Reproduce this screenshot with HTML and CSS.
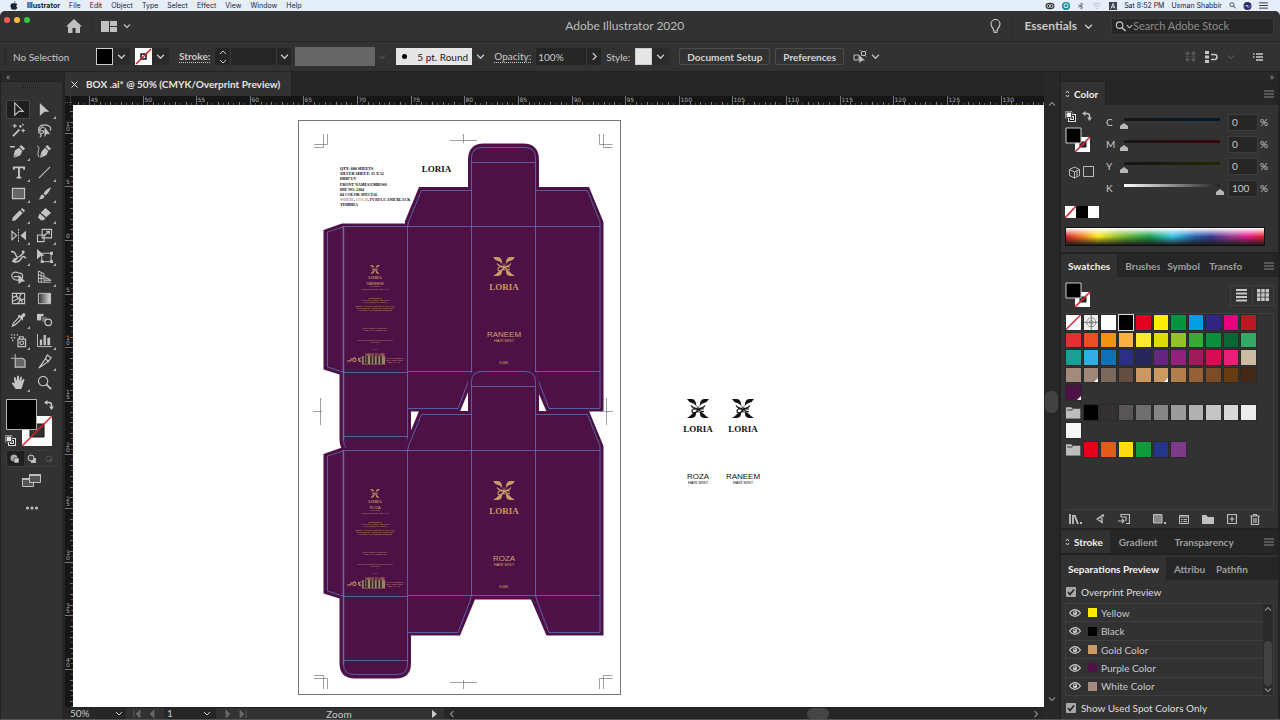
FILE: index.html
```html
<!DOCTYPE html>
<html lang="en">
<head>
    <meta charset="UTF-8">
    <meta name="viewport" content="width=device-width, initial-scale=1.0">
    <title>Adobe Illustrator 2020</title>
    <link rel="stylesheet" href="styles.css">
</head>
<body>

    <!-- Shared icons -->
    <svg class="defs" width="0" height="0" aria-hidden="true">
        <symbol id="chevron" viewBox="0 0 8 8"><path d="M1 2.500l3 3 3-3" fill="none" stroke="currentColor" stroke-width="1.200"/></symbol>
        <symbol id="lines" viewBox="0 0 10 8"><path d="M0 1h10M0 4h10M0 7h10" stroke="currentColor" fill="none"/></symbol>
        <symbol id="updown" viewBox="0 0 5 8"><path d="M1 3l1.500-2L4 3M1 5l1.500 2L4 5" fill="none" stroke="currentColor" stroke-width=".8"/></symbol>
        <symbol id="search" viewBox="0 0 12 12"><circle cx="5" cy="4.500" r="3.500" fill="none" stroke="currentColor" stroke-width="1.200"/><path d="M7.500 7l4 4" stroke="currentColor" stroke-width="1.500"/></symbol>
        <symbol id="swap" viewBox="0 0 10 10"><path d="M2.500 2.500h2.500q2.500 0 2.500 2.500v2" fill="none" stroke="currentColor" stroke-width="1.500"/><path d="M0 2.500L3.500 0v5zM7.500 10L5 6.500h5z" fill="currentColor"/></symbol>
        <symbol id="default" viewBox="0 0 11 11"><path d="M4.500 4.500h5v5h-5z" fill="none" stroke="#ddd" stroke-width="3"/><path d="M4.500 4.500h5v5h-5z" fill="none" stroke="#111"/><path d="M1 1h5.500v5.500H1z" fill="#eee" stroke="#111"/><path d="M.5.5h6.500v6.500H.5z" fill="none" stroke="#ccc" stroke-width=".6"/></symbol>
        <symbol id="eye" viewBox="0 0 12 8"><path d="M.5 4Q3 .7 6 .7T11.500 4Q9 7.300 6 7.300T.5 4z" fill="none" stroke="currentColor" stroke-width="1.200"/><circle cx="6" cy="4" r="2.200" fill="currentColor"/><circle cx="5.600" cy="3.300" r=".8" fill="#222"/></symbol>
        <symbol id="folder" viewBox="0 0 14 12"><path d="M0 1h5l1.500 1.500H14V12H0z" fill="#bdbdbd"/><path d="M1 3.500h4.500l1-1" stroke="#444" fill="none"/></symbol>
        <symbol id="pair" viewBox="0 0 26 26"><path d="M10 10h15v15H10z" fill="#fff"/><path d="M15 15h6v5h-6z" fill="#333" stroke="#111"/><path d="M10 25L25 10" stroke="#d8232a" stroke-width="1.600"/><path d="M1 1h15v15H1z" fill="#000" stroke="#ccc"/></symbol>
    </svg>

    <!-- System menu bar -->
    <nav class="menubar">
        <svg class="apple" width="8" height="9" viewBox="0 0 8 9"><path d="M4 2.600C3 2 .5 2 .5 4.900.5 7 2 9 3 8.700q1-.4 2 0C6 9 7 7.800 7.400 6.600 6 6 6 4 7.200 3.400 6.500 2.200 5 2.200 4 2.600zM4 2Q4 .4 5.500 0 5.600 1.600 4 2z" fill="#1b2233"/></svg>
        <a class="current" href="#">Illustrator</a>
        <a href="#">File</a>
        <a href="#">Edit</a>
        <a href="#">Object</a>
        <a href="#">Type</a>
        <a href="#">Select</a>
        <a href="#">Effect</a>
        <a href="#">View</a>
        <a href="#">Window</a>
        <a href="#">Help</a>
        <div class="tray">
            <svg width="10" height="8" viewBox="0 0 10 8"><ellipse cx="5" cy="4" rx="4.500" ry="3.300" fill="#333"/><circle cx="3.500" cy="4" r="1.500" fill="none" stroke="#eee" stroke-width=".8"/><circle cx="6.500" cy="4" r="1.500" fill="none" stroke="#eee" stroke-width=".8"/></svg>
            <svg width="8" height="8" viewBox="0 0 8 8"><circle cx="4" cy="4" r="4" fill="#168a9b"/><circle cx="4" cy="3.700" r="2" fill="none" stroke="#fff"/></svg>
            <svg width="8" height="8" viewBox="0 0 8 8"><path d="M1 2.500l5 3L4 7V1l2 1.500-5 3" fill="none" stroke="#667" stroke-width=".8"/></svg>
            <svg width="10" height="8" viewBox="0 0 10 8"><path d="M1 2.500q4-3 8 0M2.500 4.500q2.500-2 5 0M4 6.500q1-.8 2 0" fill="none" stroke="#bcc3cf"/></svg>
            <svg width="8" height="8" viewBox="0 0 8 8"><path d="M0 0h8v8H0z" fill="#39414f"/><path d="M2 6.500l2-5 2 5M2.800 5h2.400" stroke="#fff" fill="none" stroke-width=".8"/></svg>
            <span>Sat 8:52 PM</span>
            <span>Usman Shabbir</span>
            <svg width="7" height="7"><use href="#search"/></svg>
            <svg width="9" height="8" viewBox="0 0 8 8"><circle cx="4" cy="4" r="4" fill="#273060"/><path d="M1 4.500q2-3 3 0t3-1" stroke="#c86be0" fill="none"/><circle cx="4" cy="4" r="1" fill="#7fd0f0"/></svg>
            <svg width="9" height="7"><use href="#lines"/></svg>
        </div>
    </nav>

    <div class="app">

        <!-- Title bar -->
        <header class="titlebar">
            <div class="titlebar-left">
                <span class="light light-close"></span>
                <span class="light light-min"></span>
                <span class="light light-max"></span>
                <button class="icon home" aria-label="Home"><svg width="16" height="14" viewBox="0 0 16 14"><path d="M8 0l8 7.500h-2V14h-4.500V9h-3v5H2V7.500H0z" fill="currentColor"/></svg></button>
                <button class="icon arrange" aria-label="Arrange documents"><svg width="16" height="11" viewBox="0 0 16 11"><path d="M0 0h8v11H0zM9 0h7v5H9zM9 6h7v5H9z" fill="currentColor"/></svg><svg width="8" height="8"><use href="#chevron"/></svg></button>
            </div>
            <h1>Adobe Illustrator 2020</h1>
            <div class="titlebar-right">
                <button class="icon" aria-label="Learn"><svg width="11" height="15" viewBox="0 0 11 15"><path d="M3.500 10Q1 7.500 1 5a4.500 4.500 0 0 1 9 0q0 2.500-2.500 5v2h-4zM3.700 13.500h3.600" fill="none" stroke="currentColor" stroke-width="1.200"/></svg></button>
                <button class="workspace">Essentials <svg width="9" height="9"><use href="#chevron"/></svg></button>
                <label class="stock">
                    <svg width="11" height="11"><use href="#search"/></svg>
                    <svg width="7" height="7"><use href="#chevron"/></svg>
                    <input type="search" placeholder="Search Adobe Stock" aria-label="Search Adobe Stock">
                </label>
            </div>
        </header>

        <!-- Control bar -->
        <div class="controlbar">
            <span class="grip"></span>
            <span class="selection">No Selection</span>
            <button class="swatch-drop" aria-label="Fill"><span class="chip chip-black"></span><svg width="9" height="9"><use href="#chevron"/></svg></button>
            <button class="swatch-drop" aria-label="Stroke color"><svg class="chip-svg" width="17" height="17" viewBox="0 0 17 17"><path d="M0 0h17v17H0z" fill="#fff"/><path d="M6 6h5v5H6z" fill="none" stroke="#111" stroke-width="1.500"/><path d="M1 16L16 1" stroke="#d8232a" stroke-width="1.600"/></svg><svg width="9" height="9"><use href="#chevron"/></svg></button>
            <label class="underlined stroke-label" for="weight">Stroke:</label>
            <div class="combo">
                <button class="stepper" aria-label="Step weight"><svg width="8" height="14" viewBox="0 0 8 14"><path d="M1 4l3-3 3 3M1 10l3 3 3-3" fill="none" stroke="currentColor"/></svg></button>
                <input id="weight" class="weight" type="text">
                <button class="drop" aria-label="Weights"><svg width="9" height="9"><use href="#chevron"/></svg></button>
            </div>
            <div class="profile"><span></span><svg width="8" height="8"><use href="#chevron"/></svg></div>
            <button class="brush"><span><i></i>5 pt. Round</span><svg width="9" height="9"><use href="#chevron"/></svg></button>
            <label class="underlined" for="opacity">Opacity:</label>
            <div class="combo">
                <input id="opacity" class="opacity" type="text" value="100%">
                <button class="drop side" aria-label="Opacity slider"><svg width="9" height="9"><use href="#chevron"/></svg></button>
            </div>
            <span class="style-label">Style:</span>
            <button class="swatch-drop" aria-label="Graphic style"><span class="chip chip-light"></span><svg width="9" height="9"><use href="#chevron"/></svg></button>
            <button class="push setup">Document Setup</button>
            <button class="push">Preferences</button>
            <button class="icon select-similar" aria-label="Select similar"><svg width="14" height="14" viewBox="0 0 14 14"><path d="M1 5h5v5H1zM8.500 1.500h4v4h-4zM7 0v1M14 0v1M14 6v1" fill="none" stroke="currentColor"/><path d="M6 5l6 5.500H9L6.500 13z" fill="currentColor"/></svg><svg width="9" height="9"><use href="#chevron"/></svg></button>
            <div class="controlbar-right">
                <svg class="dim" width="11" height="11" viewBox="0 0 11 11"><path d="M1 1h3v3H1zM7 1h3v3H7zM1 7h3v3H1zM7 7h3v3H7zM0 5.500h11" fill="currentColor" stroke="currentColor" stroke-width=".6"/></svg>
                <svg width="13" height="12" viewBox="0 0 13 12"><path d="M0 0h4v3H0zM0 4.500h4v3H0zM0 9h4v3H0z" fill="currentColor"/><path d="M6 3.500h3.500a2 2 0 0 1 0 5H6" stroke="currentColor" stroke-width="1.500" fill="none"/></svg>
                <svg class="dim" width="8" height="8"><use href="#chevron"/></svg>
                <svg class="list-icon" width="10" height="8" viewBox="0 0 10 8"><path d="M3 1h7M3 4h7M3 7h7M0 1h1.500M0 4h1.500" stroke="currentColor" stroke-width="1.300"/></svg>
            </div>
        </div>

        <div class="workarea">

            <!-- Tools -->
            <aside class="tools">
                <div class="collapse">«</div>
                <div class="tools-grip"></div>
                <div class="tool-grid">
                    <button class="tool active" aria-label="Selection"><svg viewBox="0 0 16 16"><path d="M4 1l9 9H8.500L4 14z" fill="none" stroke="currentColor" stroke-width="1.200"/></svg></button>
                    <button class="tool more" aria-label="Direct Selection"><svg viewBox="0 0 16 16"><path d="M3 1l10 9.500H8L3 15z" fill="currentColor"/></svg></button>
                    <button class="tool" aria-label="Magic Wand"><svg viewBox="0 0 16 16"><path d="M2 14l7-7" stroke="currentColor" stroke-width="2"/><path d="M4 1v4M2 3h4M10 2v3M8.500 3.500h3M13 6v4M11 8h4M12 1l1.500 1.500" stroke="currentColor" stroke-width="1.200"/></svg></button>
                    <button class="tool" aria-label="Lasso"><svg viewBox="0 0 16 16"><path d="M3 9C0 6 3 2 8 2s8 3 6 6M3 9q3-2 4 0t-3 2-1-4 4-2M4 11q1 3-1 4" fill="none" stroke="currentColor" stroke-width="1.200"/><path d="M8 4l6 8-3.500-.5L8 15z" fill="currentColor"/></svg></button>
                    <button class="tool more" aria-label="Pen"><svg viewBox="0 0 16 16"><path d="M11 1l4 4-2 2-4-4zM8.500 4l3.500 3.500-2 4.500-7 3 4-5-4.500 4L4 7z" fill="currentColor"/><path d="M-1 3h5" stroke="currentColor" stroke-width="1.500"/></svg></button>
                    <button class="tool" aria-label="Curvature"><svg viewBox="0 0 16 16"><path d="M11 1l4 4-2 2-4-4zM8.500 4l3.500 3.500-2 4.500-7 3 4-5-4 4L5 8z" fill="currentColor"/><path d="M0 2q3 1 1.500 5T2 14" fill="none" stroke="currentColor"/></svg></button>
                    <button class="tool more" aria-label="Type"><svg viewBox="0 0 16 16"><path d="M3 5V2.500h11V5M8.500 2.500V13M6 13.500h5" fill="none" stroke="currentColor" stroke-width="2"/></svg></button>
                    <button class="tool more" aria-label="Line"><svg viewBox="0 0 16 16"><path d="M2 14L14 2" stroke="currentColor" stroke-width="1.200"/></svg></button>
                    <button class="tool more" aria-label="Rectangle"><svg viewBox="0 0 16 16"><path d="M1.500 2.500h13v11h-13z" fill="#666" stroke="currentColor" stroke-width="1.200"/></svg></button>
                    <button class="tool more" aria-label="Paintbrush"><svg viewBox="0 0 16 16"><path d="M15 1q-6 3-8 7l2 2q4-3 6-9zM6 9l2 2q-1 4-7 3 3-1 3-4 1-1 2-1z" fill="currentColor"/></svg></button>
                    <button class="tool more" aria-label="Pencil"><svg viewBox="0 0 16 16"><path d="M12 1l3 3-1.500 1.500-3-3zM9.500 3.500l3 3L5 14l-4 1 1-4z" fill="currentColor"/></svg></button>
                    <button class="tool more" aria-label="Eraser"><svg viewBox="0 0 16 16"><path d="M9 1l6 5-5 5-6-5zM3 7l6 5-2 2H4l-3-3z" fill="currentColor"/></svg></button>
                    <button class="tool more" aria-label="Reflect"><svg viewBox="0 0 16 16"><path d="M1 3.500v9l5-4.500z" fill="none" stroke="currentColor" stroke-width="1.200"/><path d="M16 3v10l-6-5z" fill="currentColor"/><path d="M8 1v14" stroke="currentColor" stroke-dasharray="2 1"/></svg></button>
                    <button class="tool more" aria-label="Scale"><svg viewBox="0 0 16 16"><path d="M5.500 1.500h10v9h-10zM.5 7.500h7v7h-7zM8 8l5-4.500M9.500 3.500h3.500V7" fill="none" stroke="currentColor" stroke-width="1.200"/></svg></button>
                    <button class="tool more" aria-label="Width"><svg viewBox="0 0 16 16"><path d="M0 3q4-1 5 3t4 2 5-5M1 13q4 0 6-4M3 14q6 0 8-4t5 0" fill="none" stroke="currentColor" stroke-width="1.600"/><circle cx="13" cy="3" r="1.500" fill="currentColor"/><circle cx="4" cy="11" r="1.500" fill="currentColor"/></svg></button>
                    <button class="tool more" aria-label="Free Transform"><svg viewBox="0 0 16 16"><path d="M5 4.500h10v9H5z" fill="none" stroke="currentColor"/><path d="M0 0l8 7-4 .5L0 11z" fill="currentColor"/><path d="M14 3h3v3h-3zM14 12h3v3h-3zM4 12h3v3H4z" fill="currentColor"/></svg></button>
                    <button class="tool more" aria-label="Shape Builder"><svg viewBox="0 0 16 16"><path d="M8 3C3 1 0 4 1 7s5 5 9 3 3-7-2-7zM3 7h7" fill="none" stroke="currentColor" stroke-width="1.200"/><path d="M8 5l7 7-3.500.5L8 15z" fill="currentColor"/></svg></button>
                    <button class="tool more" aria-label="Perspective Grid"><svg viewBox="0 0 16 16"><path d="M1.500 1v12H15M1.500 1l6 3v9M4.500 2.500V13M1.500 5l6 2M1.500 9h6M8 7l7 4H8M8 9.500h5" fill="none" stroke="currentColor"/></svg></button>
                    <button class="tool" aria-label="Mesh"><svg viewBox="0 0 16 16"><path d="M1.500 2.500h13v11h-13zM2 7q4-3 6 1t6 0M6 3q-1 3 2 5t-1 5M11 3q-3 3-1 5t2 5M2 11q4-2 6-3" fill="none" stroke="currentColor" stroke-width="1.200"/></svg></button>
                    <button class="tool" aria-label="Gradient"><svg viewBox="0 0 16 16"><defs><linearGradient id="toolgrad"><stop stop-color="#333"/><stop offset="1" stop-color="#ddd"/></linearGradient></defs><path d="M1.500 2.500h13v11h-13z" fill="url(#toolgrad)" stroke="currentColor"/></svg></button>
                    <button class="tool more" aria-label="Eyedropper"><svg viewBox="0 0 16 16"><path d="M9 3l1.500 1L12 2q2-2 3 0t-1 3l-1.500 1.500L13 8l-1 1-5-5z" fill="currentColor"/><path d="M8.500 5.500L2.500 12 1.500 15l3-1.500 6-5.500" fill="none" stroke="currentColor" stroke-width="1.300"/></svg></button>
                    <button class="tool" aria-label="Blend"><svg viewBox="0 0 16 16"><path d="M0 2h7v7H0z" fill="currentColor"/><path d="M5 5h6v6H5z" fill="#777" stroke="#323232"/><circle cx="12" cy="11" r="3.500" fill="#323232" stroke="currentColor" stroke-width="1.300"/></svg></button>
                    <button class="tool more" aria-label="Symbol Sprayer"><svg viewBox="0 0 16 16"><path d="M7.500 6.500h8v8h-8zM9 6V4h4v2" fill="none" stroke="currentColor" stroke-width="1.300"/><circle cx="11.500" cy="10.500" r="2" fill="none" stroke="currentColor" stroke-width="1.200"/><path d="M0 2h1.500M3 2h1.500M6 2h1.500M0 5h1.500M3 5h1.500M1 8h1.500" stroke="currentColor" stroke-width="1.500"/></svg></button>
                    <button class="tool more" aria-label="Column Graph"><svg viewBox="0 0 16 16"><path d="M.5 1v13.500H16" fill="none" stroke="currentColor"/><path d="M3 7h2.500v6H3zM7 2h2.500v11H7zM11 5h3v8h-3z" fill="currentColor"/></svg></button>
                    <button class="tool" aria-label="Artboard"><svg viewBox="0 0 16 16"><path d="M4.500 4.500h8l2.500 2.500v7H4.500z" fill="#666" stroke="currentColor" stroke-width="1.200"/><path d="M0 4.500h4M4.500 0v4" stroke="currentColor"/></svg></button>
                    <button class="tool more" aria-label="Slice"><svg viewBox="0 0 16 16"><path d="M11 1l4 3-3 4-3-3zM9 5l3 3L2 15z" fill="none" stroke="currentColor" stroke-width="1.300"/></svg></button>
                    <button class="tool more" aria-label="Hand"><svg viewBox="0 0 16 16"><path d="M5 15L1 9q0-2 3 0L3 3q1-1.500 2 0l1 3.500L6.500 1q1-1 2 0v5L10 2q1.500-1 1.700.5L11 7l2-3q1.500 0 1.300 1.500L12 12l-1 3z" fill="currentColor"/></svg></button>
                    <button class="tool" aria-label="Zoom"><svg viewBox="0 0 16 16"><circle cx="6.500" cy="6.500" r="5" fill="none" stroke="currentColor" stroke-width="1.200"/><path d="M10 10l5 5" stroke="currentColor" stroke-width="2"/></svg></button>
                </div>
                <svg class="fillstroke" width="50" height="48" viewBox="0 0 50 48">
                    <path d="M17 18h30v30H17z" fill="#fff"/><path d="M25 26h14v13H25z" fill="#333" stroke="#111"/><path d="M17 48L47 18" stroke="#d8232a" stroke-width="1.500"/>
                    <path d="M1.500 1.500h30v30h-30z" fill="#000" stroke="#b5b5b5"/>
                    <use href="#swap" x="39" y="2" width="10" height="10"/><use href="#default" x="0" y="37" width="11" height="11"/>
                </svg>
                <div class="modes">
                    <button class="on" aria-label="Draw Normal"><svg width="10" height="10" viewBox="0 0 10 10"><circle cx="4" cy="4" r="3.500" fill="#aaa"/><path d="M4 4h5v5H4z" fill="#ccc" stroke="#222" stroke-width=".6"/></svg></button>
                    <button aria-label="Draw Behind"><svg width="10" height="10" viewBox="0 0 10 10"><path d="M4 4h5v5H4z" fill="#bbb"/><circle cx="4" cy="4" r="3" fill="#444" stroke="#ccc"/></svg></button>
                    <button aria-label="Draw Inside"><svg width="10" height="10" viewBox="0 0 10 10"><circle cx="5" cy="5" r="3" fill="none" stroke="#555"/><path d="M5 5h2v2H5z" fill="#555"/></svg></button>
                </div>
                <button class="icon screen" aria-label="Screen mode"><svg width="20" height="15" viewBox="0 0 20 15"><path d="M.5 5.500h11v8H.5z" fill="#555" stroke="currentColor"/><path d="M7.500 1.500h11v8h-11z" fill="#555" stroke="currentColor"/><path d="M7 2h12M0 6h7" stroke="currentColor" stroke-width="2"/></svg></button>
                <button class="icon dots" aria-label="Edit toolbar"><svg width="12" height="4" viewBox="0 0 12 4"><circle cx="1.500" cy="2" r="1.500"/><circle cx="6" cy="2" r="1.500"/><circle cx="10.500" cy="2" r="1.500"/></svg></button>
            </aside>

            <!-- Document window -->
            <main class="document">
                <div class="doc-tabs">
                    <div class="doc-tab"><button class="close" aria-label="Close"><svg width="7" height="7" viewBox="0 0 7 7"><path d="M.5.5l6 6M6.500.5l-6 6" stroke="currentColor"/></svg></button>BOX .ai* @ 50% (CMYK/Overprint Preview)</div>
                </div>
                <div class="view">
                    <svg class="corner" width="8" height="9"><path d="M0 6.500h8M5.500 0v9" stroke="#555" stroke-dasharray="1 1"/></svg>
                    <svg class="ruler-h" id="rulerH"></svg>
                    <svg class="ruler-v" id="rulerV"></svg>
                    <div class="canvas">
                        <svg width="972" height="602" viewBox="73 105 972 602">
                            <defs>
                                <g id="mark">
                                    <path d="M-11-9.500H-6Q-2-9-2-4L-1-1Q-3-5-6-5.500T-11-9.500zM11-9.500H6Q2-9 2-4L1-1Q3-5 6-5.500T11-9.500zM-11 9.500H-6Q-2 9-2 5L-1 3Q-4 3-6 5.500T-11 9.500zM11 9.500H6Q2 9 2 5L1 3Q4 3 6 5.500T11 9.500z"/>
                                    <path d="M-7-3Q-5 0-1 0M7-3Q5 0 1 0M-5 .5h11M-1 0Q-6 0-6 2.500T-3 4-1 0M1 1q1 2.500 5 2M0-2v6" fill="none" stroke="currentColor" stroke-width="1.200"/>
                                </g>
                                <g id="brand">
                                    <use href="#mark"/>
                                    <text class="loria" y="23">LORIA</text>
                                </g>
                                <g id="box">
                                    <path class="bleed" d="M323.500 230L342 223.500H405V221L419 187H468V160Q468 143.500 484 143.500H523Q539 143.500 539 160V187H589L603.500 222V411.500H546.500L531 375.500H475L460 411.500H411V439Q411 454.500 396 454.500H355Q339.500 454.500 339.500 439V374.500L323.500 369.500z"/>
                                    <path class="crease" d="M343 226.500H600M343.500 372.500H407M407 371.500H600M407.500 226V440M471.500 371.500V158Q471.500 147.500 482 147.500H525Q535.500 147.500 535.500 158V371.500M471.500 162.500H535.500M600 408V222L587.500 190.500H536M471.500 190.500H421.500L408.500 222 407.500 227M343 227L327.500 232V367L343 372M471.500 371L470 377 458 408.500H408M535.500 371L537 377 549 408.500H600M343.500 436.500H407.500M343.500 440Q343.500 450.500 354 450.500H397Q407.500 450.500 407.500 440"/>
                                    <path class="crease wide" d="M343.500 226V440"/>
                                    <use class="gold" href="#brand" transform="translate(504 266.500)"/>
                                    <g class="gold" transform="translate(375 269.500) scale(.44)"><use href="#mark"/></g>
                                    <g class="gold tiny">
                                        <text class="tiny-brand" x="375" y="279">LORIA</text>
                                        <text x="375" y="287">HAIR MIST</text>
                                        <text x="375" y="290">PERFUMED MIST FOR HAIR</text>
                                        <text x="375" y="299">INGREDIENTS</text>
                                        <text x="375" y="301">ALCOHOL, WATER, PERFUME</text>
                                        <text x="375" y="303">PANTHENOL, GLYCERIN</text>
                                        <text x="375" y="307">BENZYL ALCOHOL, BENZYL SALICYLATE</text>
                                        <text x="375" y="309">CITRONELLOL, COUMARIN, GERANIOL</text>
                                        <text x="375" y="311">LINALOOL, D-LIMONENE, EUGENOL</text>
                                        <text x="375" y="329">FOR EXTERNAL USE ONLY</text>
                                        <text x="375" y="331">KEEP AWAY FROM FIRE</text>
                                        <text x="375" y="341">Fine spray keep out of reach of children</text>
                                        <text x="375" y="343">cool place</text>
                                        <text x="375" y="350">Vol. ℮</text>
                                        <text class="made" x="375" y="355.500">MADE IN UAE</text>
                                        <text x="394" y="359">MANUFACTURED BY</text>
                                        <text x="394" y="361">LORIA PERFUMES</text>
                                        <text x="394" y="363">DUBAI, U.A.E.</text>
                                    </g>
                                    <path d="M362 356H385V364.500H362z" fill="#9a8468"/>
                                    <path d="M364.500 356v8M367 356v8M371 356v8M374 356v8M377.500 356v8M381 356v8" stroke="#2c1a22" stroke-width="1.500"/>
                                    <path d="M347 361h4V358M353 358q3-1 3 2t-3 1zM358 358l3 4M361 358q-4 1-1 4" fill="none" stroke="#c99a66"/>
                                </g>
                            </defs>
                            <rect class="artboard" x="298.500" y="120.500" width="322" height="574"/>
                            <path class="crops" d="M314 144.500h13.500V134M314 147.500h9.500V134M612.500 144.500H599.500V134M612.500 147.500H603.500V134M314 675.500h9.500V689M314 678.500h13.500V689M612.500 675.500H603.500V689M612.500 678.500H599.500V689M450 140.500h27M463.500 134v9M450 682.500h27M463.500 680v9M313 411.500h9M320.500 398v27M604 411.500h9M606.500 398v27"/>
                            <use href="#box"/>
                            <use href="#box" y="224"/>

                            <text class="product" x="504" y="336.500">RANEEM</text>
                            <text class="sub" x="504" y="341.500">HAIR MIST</text>
                            <text class="sub" x="504" y="364">50ML</text>
                            <text class="product" x="504" y="560.500">ROZA</text>
                            <text class="sub" x="504" y="565.500">HAIR MIST</text>
                            <text class="sub" x="504" y="588">50ML</text>
                            <text class="side-name" x="375" y="284.500">RANEEM</text>
                            <text class="side-name" x="375" y="508.500">ROZA</text>

                            <text class="loria ink" x="436.500" y="171.500">LORIA</text>
                            <g class="notes">
                                <text x="340" y="170">QTY: 600 SHEETS</text>
                                <text x="340" y="175">SILVER SHEET: 35 X 52</text>
                                <text x="340" y="180">DRIP UV</text>
                                <text x="340" y="185.500">FRONT NAMES EMBOSS</text>
                                <text x="340" y="190.500">DIE NO. 1364</text>
                                <text x="340" y="195.500">04 COLOR SPECIAL</text>
                                <text x="340" y="201"><tspan fill="#a48a7b">WHITE</tspan>, <tspan fill="#c99a66">GOLD</tspan>, <tspan fill="#4d1145">PURPLE</tspan> AND BLACK</text>
                                <text x="340" y="206">TEMDRA</text>
                            </g>

                            <use class="ink" href="#brand" transform="translate(698 408.500)"/>
                            <use class="ink" href="#brand" transform="translate(743 408.500)"/>
                            <text class="product ink" x="698" y="479">ROZA</text>
                            <text class="product ink" x="743" y="479">RANEEM</text>
                            <text class="sub ink" x="698" y="484">HAIR MIST</text>
                            <text class="sub ink" x="743" y="484">HAIR MIST</text>
                        </svg>
                    </div>
                </div>
                <footer class="status">
                    <select class="zoom-level" aria-label="Zoom level"><option>50%</option></select>
                    <svg class="nav-icons" width="24" height="8" viewBox="0 0 24 8"><path d="M1 0v8M7 0L3 4l4 4zM21 0l-4 4 4 4z" fill="#666" stroke="#666" stroke-width=".8"/></svg>
                    <select class="board" aria-label="Artboard"><option>1</option></select>
                    <svg class="nav-icons" width="24" height="8" viewBox="0 0 24 8"><path d="M23 0v8M17 0l4 4-4 4zM3 0l4 4-4 4z" fill="#666" stroke="#666" stroke-width=".8"/></svg>
                    <span class="status-text">Zoom</span>
                    <button class="play" aria-label="Status menu"><svg width="5" height="8" viewBox="0 0 5 8"><path d="M0 0l5 4-5 4z" fill="#ccc"/></svg></button>
                    <div class="scroll-h"><svg width="8" height="8"><use href="#chevron"/></svg><span></span><svg width="8" height="8"><use href="#chevron"/></svg></div>
                </footer>
            </main>

            <div class="scroll-v"><svg width="8" height="8"><use href="#chevron"/></svg><span></span><svg width="8" height="8"><use href="#chevron"/></svg></div>

            <!-- Panels -->
            <aside class="panels">
                <div class="collapse right">»</div>

                <section class="panel">
                    <div class="tabs">
                        <button class="tab on"><svg width="5" height="8"><use href="#updown"/></svg>Color</button>
                        <button class="menu" aria-label="Panel menu"><svg width="10" height="8"><use href="#lines"/></svg></button>
                    </div>
                    <div class="color">
                        <div class="color-left">
                            <div class="color-top"><svg width="11" height="11"><use href="#default"/></svg><svg width="10" height="10"><use href="#swap"/></svg></div>
                            <svg width="26" height="26"><use href="#pair"/></svg>
                            <svg class="cube" width="30" height="14" viewBox="0 0 30 14"><path d="M4.500 4.500l5-2.500 5 2.500v6l-5 2.500-5-2.500zM4.500 4.500l5 2.500 5-2.500M9.500 7v6M12 5.500v6" fill="none" stroke="#bbb"/><path d="M18.500 1.500h10v10h-10z" fill="none" stroke="#bbb"/></svg>
                        </div>
                        <div class="sliders">
                            <label for="c">C</label><input class="range cyan" type="range" value="0" aria-label="Cyan"><input id="c" type="text" value="0"><span>%</span>
                            <label for="m">M</label><input class="range magenta" type="range" value="0" aria-label="Magenta"><input id="m" type="text" value="0"><span>%</span>
                            <label for="y">Y</label><input class="range yellow" type="range" value="0" aria-label="Yellow"><input id="y" type="text" value="0"><span>%</span>
                            <label for="k">K</label><input class="range black" type="range" value="100" aria-label="Black"><input id="k" type="text" value="100"><span>%</span>
                        </div>
                    </div>
                    <svg class="quick" width="34" height="12" viewBox="0 0 34 12"><path d="M0 0h34v12H0z" fill="#fff"/><path d="M11 0h12v12H11z"/><path d="M0 12L11 0" stroke="#d8232a" stroke-width="1.600"/></svg>
                    <div class="spectrum"></div>
                </section>

                <section class="panel swatches">
                    <div class="tabs">
                        <button class="tab on plain">Swatches</button>
                        <button class="tab cut">Brushes</button>
                        <button class="tab cut">Symbol</button>
                        <button class="tab cut last">Transfo</button>
                        <button class="menu" aria-label="Panel menu"><svg width="10" height="8"><use href="#lines"/></svg></button>
                    </div>
                    <div class="swatch-head">
                        <svg width="26" height="26"><use href="#pair"/></svg>
                        <div class="views">
                            <button aria-label="List view"><svg width="11" height="13" viewBox="0 0 11 13"><path d="M0 1h11M0 4.500h11M0 8h11M0 11.500h11" stroke="currentColor" stroke-width="1.800"/></svg></button>
                            <button aria-label="Thumbnail view"><svg width="12" height="12" viewBox="0 0 12 12"><path d="M0 0h3.400v3.400H0zM4.300 0h3.400v3.400H4.300zM8.600 0H12v3.400H8.600zM0 4.300h3.400v3.400H0zM4.300 4.300h3.400v3.400H4.300zM8.600 4.300H12v3.400H8.600zM0 8.600h3.400V12H0zM4.300 8.600h3.400V12H4.300zM8.600 8.600H12V12H8.600z" fill="currentColor"/></svg></button>
                        </div>
                    </div>
                    <div class="swatch-box">
                        <div class="swatch-grid main" id="mainSwatches"></div>
                        <div class="swatch-grid grays" id="graySwatches"></div>
                        <div class="swatch-grid brights" id="brightSwatches"></div>
                    </div>
                    <div class="swatch-tools">
                        <button class="icon" aria-label="Libraries"><svg width="13" height="10" viewBox="0 0 13 10"><path d="M1 0v10M4 1v9M5.500 1l3.500 9" stroke="currentColor" stroke-width="1.800"/><path d="M11 8h2v2h-2z" fill="currentColor"/></svg></button>
                        <button class="icon" aria-label="Themes"><svg width="10" height="10" viewBox="0 0 10 10"><path d="M8 1L2 5l6 4M4 4h3v3H4" fill="none" stroke="currentColor" stroke-width="1.200"/><circle cx="8" cy="1.500" r="1.200" fill="currentColor"/></svg></button>
                        <button class="icon wide-gap" aria-label="Add to library"><svg width="12" height="10" viewBox="0 0 12 10"><path d="M3 3V.5h8.500v9H8M0 7h6M4 5l2 2-2 2M3 3h5v4" fill="none" stroke="currentColor" stroke-width="1.200"/></svg></button>
                        <button class="icon" aria-label="Show kinds"><svg width="13" height="10" viewBox="0 0 13 10"><path d="M.5.5h8.500v8.500H.5z" fill="#888" stroke="currentColor"/><path d="M11 8h2v2h-2z" fill="currentColor"/></svg></button>
                        <button class="icon" aria-label="Options"><svg width="10" height="9" viewBox="0 0 10 9"><path d="M.5.5h9v8h-9zM1 2h8M2 4.500h1.500M2 6.500h1.500M4.500 4.500H8M4.500 6.500H8" fill="none" stroke="currentColor"/></svg></button>
                        <button class="icon" aria-label="New group"><svg width="12" height="9" viewBox="0 0 12 9"><path d="M0 0h4l2 2h6v7H0z" fill="currentColor"/></svg></button>
                        <button class="icon" aria-label="New swatch"><svg width="10" height="10" viewBox="0 0 10 10"><path d="M.5.5h9v9h-9zM5 2.500v5M2.500 5h5" fill="none" stroke="currentColor" stroke-width="1.200"/></svg></button>
                        <button class="icon" aria-label="Delete"><svg width="10" height="11" viewBox="0 0 10 11"><path d="M0 2h10M3.500 2V.5h3V2M1.500 2v8.500h7V2M4 4v5M6 4v5" fill="none" stroke="currentColor" stroke-width="1.200"/></svg></button>
                    </div>
                </section>

                <section class="panel">
                    <div class="tabs">
                        <button class="tab on"><svg width="5" height="8"><use href="#updown"/></svg>Stroke</button>
                        <button class="tab">Gradient</button>
                        <button class="tab">Transparency</button>
                        <button class="menu" aria-label="Panel menu"><svg width="10" height="8"><use href="#lines"/></svg></button>
                    </div>
                </section>

                <section class="panel separations">
                    <div class="tabs">
                        <button class="tab on plain">Separations Preview</button>
                        <button class="tab cut">Attribu</button>
                        <button class="tab cut last">Pathfin</button>
                    </div>
                    <label class="check"><input type="checkbox" checked>Overprint Preview</label>
                    <div class="inks">
                        <ul>
                            <li><svg width="12" height="8"><use href="#eye"/></svg><i class="ink-yellow"></i>Yellow</li>
                            <li><svg width="12" height="8"><use href="#eye"/></svg><i class="ink-black"></i>Black</li>
                            <li><svg width="12" height="8"><use href="#eye"/></svg><i class="ink-gold"></i>Gold Color</li>
                            <li><svg width="12" height="8"><use href="#eye"/></svg><i class="ink-purple"></i>Purple Color</li>
                            <li><svg width="12" height="8"><use href="#eye"/></svg><i class="ink-white"></i>White Color</li>
                        </ul>
                        <div class="inks-scroll"><svg width="8" height="8"><use href="#chevron"/></svg><span></span><svg width="8" height="8"><use href="#chevron"/></svg></div>
                    </div>
                    <label class="check"><input type="checkbox" checked>Show Used Spot Colors Only</label>
                </section>
            </aside>
        </div>
    </div>

    <script src="script.js"></script>
</body>
</html>
```
FILE: styles.css
```css
/* General page styling */
* {
    box-sizing: border-box;
}

body {
    margin: 0;
    height: 100vh;
    display: flex;
    flex-direction: column;
    overflow: hidden;
    background: #e6eefa;
    color: #c8c8c8;
    font-family: Lato, "Noto Sans", sans-serif;
    font-size: 10px;
    line-height: 12px;
}

button, input, select {
    font: inherit;
    color: inherit;
    border: 0;
    padding: 0;
    margin: 0;
    background: none;
    border-radius: 0;
    outline: 0;
}

svg {
    display: block;
    flex: none;
}

.defs {
    position: absolute;
}

/* System menu bar */
.menubar {
    display: flex;
    align-items: center;
    gap: 9px;
    height: 11px;
    flex: none;
    padding: 0 12px 0 10px;
    font-family: Inter, sans-serif;
    font-size: 7px;
    line-height: 11px;
    color: #1b2233;
}

.menubar a {
    color: inherit;
    text-decoration: none;
}

.menubar .current {
    font-weight: 700;
}

.tray {
    margin-left: auto;
    display: flex;
    align-items: center;
    gap: 7px;
}

/* Application window */
.app {
    flex: 1;
    min-height: 0;
    display: flex;
    flex-direction: column;
    background: #323232;
    border-radius: 5px 5px 0 0;
    border-bottom: 1px solid #555;
    overflow: hidden;
}

.icon {
    display: flex;
    align-items: center;
    color: #c0c0c0;
}

/* Title bar */
.titlebar {
    display: grid;
    grid-template-columns: 44% auto 1fr;
    align-items: center;
    height: 31px;
    flex: none;
    border-bottom: 1px solid #262626;
}

.titlebar h1 {
    margin: 0 0 0 2px;
    font-size: 12px;
    font-weight: 400;
    color: #bdbdbd;
}

.titlebar-left {
    display: flex;
    align-items: center;
    gap: 4px;
    padding-left: 4px;
}

.light {
    width: 6px;
    height: 6px;
    border-radius: 50%;
    margin-bottom: 12px;
}

.light-close {
    background: #fc5b57;
}

.light-min {
    background: #fdbc40;
}

.light-max {
    background: #34c84a;
}

.home {
    margin-left: 32px;
    padding-right: 10px;
    border-right: 1px solid #2a2a2a;
}

.arrange {
    gap: 6px;
    padding-left: 4px;
}

.titlebar-right {
    display: flex;
    align-items: center;
    justify-content: flex-end;
    padding-right: 6px;
}

.workspace {
    display: flex;
    align-items: center;
    gap: 7px;
    height: 20px;
    margin: 0 15px 0 11px;
    padding: 0 3px 0 11px;
    border-left: 1px solid #2a2a2a;
    font-size: 12px;
    font-weight: 700;
}

.stock {
    display: flex;
    align-items: center;
    width: 163px;
    height: 17px;
    padding-left: 3px;
    background: #262626;
    border: 1px solid #3a3a3a;
    font-size: 11px;
}

.stock input {
    width: 120px;
}

.stock input::placeholder {
    color: #8c8c8c;
}

/* Control bar */
.controlbar {
    display: flex;
    align-items: center;
    height: 30px;
    flex: none;
    padding-right: 17px;
    border-bottom: 1px solid #232323;
    white-space: nowrap;
}

.grip {
    width: 3px;
    height: 16px;
    margin: 0 6px 0 4px;
    border-left: 1px dotted #222;
    border-right: 1px dotted #222;
}

.selection {
    width: 83px;
}

.swatch-drop {
    display: flex;
    align-items: center;
    height: 17px;
    width: 34px;
    gap: 4px;
    margin-right: 5px;
    background: #2a2a2a;
}

.chip {
    width: 17px;
    height: 17px;
    border: 1px solid #ccc;
}

.chip-black {
    background: #000;
}

.chip-light {
    background: #e6e6e6;
}

.underlined {
    border-bottom: 1px dotted #c8c8c8;
    line-height: 11px;
}

.stroke-label {
    margin: 0 5px 0 5px;
    font-weight: 700;
}

.combo {
    display: flex;
    height: 17px;
    gap: 1px;
    background: #3a3a3a;
}

.combo button,
.combo input {
    background: #262626;
    height: 17px;
}

.stepper {
    width: 15px;
    display: flex;
    align-items: center;
    justify-content: center;
}

.weight {
    width: 45px;
}

.drop {
    width: 14px;
    display: flex;
    align-items: center;
    justify-content: center;
}

.side svg {
    transform: rotate(-90deg);
}

.profile {
    display: flex;
    align-items: center;
    gap: 3px;
    width: 94px;
    margin: 0 7px 0 4px;
    color: #555;
}

.profile span {
    width: 80px;
    height: 19px;
    background: #666;
}

.brush {
    display: flex;
    align-items: center;
    gap: 4px;
    width: 91px;
    margin-right: 7px;
}

.brush span {
    display: flex;
    align-items: center;
    gap: 10px;
    width: 76px;
    height: 17px;
    padding-left: 6px;
    background: #e6e6e6;
    color: #222;
}

.brush i {
    width: 5px;
    height: 5px;
    border-radius: 50%;
    background: #000;
}

.controlbar .opacity {
    width: 50px;
    padding-left: 2px;
}

.brush ~ .combo {
    margin-left: 5px;
}

.style-label {
    margin: 0 5px;
}

.push {
    height: 17px;
    padding: 0 7px;
    margin-right: 5px;
    border: 1px solid #4c4c4c;
    border-radius: 2px;
    font-weight: 700;
    color: #d6d6d6;
}

.setup {
    margin-left: 5px;
}

.select-similar {
    gap: 4px;
    margin-left: 4px;
}

.controlbar-right {
    display: flex;
    align-items: center;
    gap: 9px;
    margin-left: auto;
}

.dim {
    color: #555;
}

.list-icon {
    margin-left: 9px;
}

/* Main work area */
.workarea {
    flex: 1;
    min-height: 0;
    display: flex;
}

.collapse {
    height: 10px;
    flex: none;
    padding-left: 5px;
    background: #282828;
    border-bottom: 1px solid #222;
    line-height: 8px;
    color: #999;
}

.collapse.right {
    padding-right: 4px;
    text-align: right;
}

/* Tools */
.tools {
    width: 65px;
    flex: none;
    border-left: 1px solid #222;
    border-right: 3px solid #262626;
}

.tools-grip {
    width: 18px;
    height: 3px;
    margin: 4px auto 10px;
    background: repeating-linear-gradient(90deg, #222 0 1px, #3a3a3a 1px 2px);
}

.tool-grid {
    display: grid;
    grid-template-columns: 26px 26px;
    grid-auto-rows: 21px;
    padding-left: 4px;
}

.tool {
    position: relative;
    display: flex;
    align-items: center;
    justify-content: center;
    color: #c4c4c4;
}

.tool svg {
    width: 15px;
    height: 15px;
    overflow: visible;
}

.tool.active {
    background: #1f1f1f;
    border: 1px solid #444;
    margin: 1px;
}

.tool.more::after {
    content: "";
    position: absolute;
    right: 1px;
    bottom: 1px;
    border-left: 3px solid transparent;
    border-bottom: 3px solid #aaa;
}

.fillstroke {
    margin: 5px 0 0 4px;
    color: #c4c4c4;
}

.modes {
    display: flex;
    width: 52px;
    margin: 4px 0 6px 5px;
    border: 1px solid #3c3c3c;
}

.modes button {
    flex: 1;
    height: 15px;
    display: flex;
    align-items: center;
    justify-content: center;
}

.modes .on {
    background: #1f1f1f;
}

.screen {
    margin: 0 auto 18px 21px;
}

.dots {
    margin-left: 25px;
    fill: #c4c4c4;
}

/* Document window */
.document {
    flex: 1;
    min-width: 0;
    display: flex;
    flex-direction: column;
    background: #262626;
}

.doc-tabs {
    display: flex;
    height: 24px;
    flex: none;
}

.doc-tab {
    display: flex;
    align-items: center;
    gap: 8px;
    padding: 0 11px 0 6px;
    background: #323232;
    font-weight: 700;
    color: #e4e4e4;
}

.view {
    flex: 1;
    min-height: 0;
    display: grid;
    grid-template-columns: 8px 1fr;
    grid-template-rows: 9px 1fr;
    background: #161616;
}

.ruler-h,
.ruler-v {
    width: 100%;
    height: 100%;
    font-family: "DejaVu Sans", sans-serif;
    font-size: 6px;
    fill: #aaa;
    stroke: none;
}

.canvas {
    background: #fff;
    overflow: hidden;
}

/* Artwork */
.artboard {
    fill: #fff;
    stroke: #777;
}

.crops {
    fill: none;
    stroke: #777;
    stroke-width: .7;
}

.bleed {
    fill: #4d1145;
}

.crease {
    fill: none;
    stroke: #5a73bd;
    stroke-width: .8;
}

.wide {
    stroke: #6c6aa0;
    stroke-width: 1.5;
}

.gold {
    fill: #c99a66;
    color: #c99a66;
}

.ink,
.product.ink,
.sub.ink {
    fill: #111;
    color: #111;
}

.loria {
    font: 700 9px "Liberation Serif", serif;
    text-anchor: middle;
}

.product {
    font: 8px "Liberation Sans", sans-serif;
    text-anchor: middle;
    fill: #d0a06c;
}

.sub {
    font: 4px "Liberation Sans", sans-serif;
    text-anchor: middle;
    fill: #d0a06c;
}

.side-name {
    font: 4px "Liberation Sans", sans-serif;
    text-anchor: middle;
    fill: #d0a06c;
}

.tiny text {
    font: 2px "Liberation Sans", sans-serif;
    text-anchor: middle;
}

.tiny .tiny-brand {
    font: 700 4px "Liberation Serif", serif;
}

.tiny .made {
    font-size: 3px;
}

.notes {
    font: 700 4px "Liberation Serif", serif;
    fill: #000;
}

/* Status bar and scrollbars */
.status {
    display: flex;
    align-items: center;
    height: 12px;
    flex: none;
    background: #323232;
    border-top: 1px solid #222;
}

.status select {
    appearance: none;
    height: 11px;
    line-height: 11px;
    background: #262626 url("data:image/svg+xml,%3Csvg xmlns='http://www.w3.org/2000/svg' width='9' height='9'%3E%3Cpath d='M1 3l3 3 3-3' fill='none' stroke='%23ccc'/%3E%3C/svg%3E") no-repeat right 4px center;
}

.status .zoom-level {
    width: 61px;
    padding-left: 5px;
    background-position: right 2px center;
}

.nav-icons {
    margin: 0 7px;
}

.board {
    width: 52px;
    padding-left: 3px;
}

.status-text {
    width: 170px;
    text-align: center;
}

.play {
    width: 20px;
    display: flex;
    justify-content: center;
}

.scroll-h {
    flex: 1;
    display: flex;
    align-items: center;
    justify-content: space-between;
    height: 12px;
    padding: 0 4px;
    background: #262626;
    color: #888;
}

.scroll-h svg:first-child {
    transform: rotate(90deg);
}

.scroll-h svg:last-child {
    transform: rotate(-90deg);
}

.scroll-h span {
    width: 22px;
    height: 12px;
    margin-left: 147px;
    border-radius: 6px;
    background: #454545;
}

.scroll-v {
    width: 15px;
    flex: none;
    display: flex;
    flex-direction: column;
    align-items: center;
    justify-content: space-between;
    padding: 28px 0 16px;
    background: #282828;
    color: #888;
}

.scroll-v svg:first-child,
.inks-scroll svg:first-child {
    transform: rotate(180deg);
}

.scroll-v span {
    width: 13px;
    height: 22px;
    border-radius: 6px;
    background: #424242;
}

/* Panels */
.panels {
    width: 221px;
    flex: none;
    display: flex;
    flex-direction: column;
    border-left: 2px solid #222;
    border-right: 2px solid #222;
}

.panel {
    border-bottom: 2px solid #222;
}

.tabs {
    display: flex;
    height: 23px;
    background: #262626;
}

.tab {
    display: flex;
    align-items: center;
    gap: 4px;
    padding: 0 8px;
    border-right: 1px solid #222;
    font-weight: 700;
    color: #9e9e9e;
}

.tab.on {
    background: #323232;
    color: #f0f0f0;
    padding: 0 7px 0 4px;
}

.tab.on.plain {
    padding: 0 7px;
}

.tab.cut {
    display: block;
    width: 42px;
    padding: 0 0 0 7px;
    border: 0;
    overflow: hidden;
    text-align: left;
}

.tab.cut.last {
    width: 50px;
}

.menu {
    margin-left: auto;
    padding-right: 4px;
    color: #888;
}

/* Color panel */
.color {
    display: flex;
    gap: 11px;
    padding: 6px 8px 0 4px;
}

.color-left {
    width: 30px;
}

.color-top {
    display: flex;
    gap: 6px;
    margin-bottom: 5px;
    color: #bbb;
}

.cube {
    margin-top: 12px;
}

.sliders {
    flex: 1;
    display: grid;
    grid-template-columns: 12px 1fr 30px 10px;
    grid-auto-rows: 22px;
    column-gap: 2px;
    align-items: center;
}

.sliders input[type="text"] {
    width: 100%;
    height: 17px;
    padding-left: 3px;
    background: #262626;
    border: 1px solid #3d3d3d;
}

.range {
    appearance: none;
    min-width: 0;
    width: calc(100% - 2px);
    height: 12px;
    background-repeat: no-repeat;
    background-position: 4px 2px;
    background-size: calc(100% - 8px) 3px;
}

.range::-webkit-slider-thumb {
    appearance: none;
    width: 8px;
    height: 6px;
    margin-top: 8px;
    background: #b8b8b8;
    clip-path: polygon(50% 0, 100% 50%, 100% 100%, 0 100%, 0 50%);
}

.cyan {
    background-image: linear-gradient(90deg, #161616, #041a2c);
}

.magenta {
    background-image: linear-gradient(90deg, #161616, #3a0509);
}

.yellow {
    background-image: linear-gradient(90deg, #161616, #222600);
}

.black {
    background-image: linear-gradient(90deg, #fff, #222);
}

.quick {
    margin: 7px 0 9px 4px;
}

.spectrum {
    height: 19px;
    margin: 0 13px 6px 4px;
    border: 1px solid #111;
    background:
        linear-gradient(#fff 0, rgba(255, 255, 255, 0) 50%, rgba(0, 0, 0, 0) 50%, #1a1a1a 100%),
        linear-gradient(90deg, #e3202b, #f47b20 8%, #ffe81a 16%, #6cb52d 30%, #19a04b 42%, #35c4ea 54%, #2462ae 65%, #3a3a96 73%, #a03a94 84%, #ea1a8c 92%, #e3202b);
}

/* Swatches panel */
.swatch-head {
    display: flex;
    justify-content: space-between;
    align-items: center;
    padding: 5px 4px 5px 4px;
}

.views {
    display: flex;
    border: 1px solid #3f3f3f;
}

.views button {
    width: 21px;
    height: 19px;
    display: flex;
    align-items: center;
    justify-content: center;
}

.views button + button {
    border-left: 1px solid #3f3f3f;
}

.swatch-box {
    height: 197px;
    margin: 0 4px;
    border: 1px solid #3f3f3f;
    border-left: 0;
}

.swatch-grid {
    display: grid;
    grid-template-columns: repeat(11, 1fr);
    grid-auto-rows: 1fr;
    gap: 1px;
    width: 192px;
}

.main {
    height: 87px;
    margin-bottom: 3px;
}

.grays {
    height: 35px;
    margin-bottom: 2px;
}

.brights {
    height: 17px;
}

.swatch {
    position: relative;
    border: 1px solid #2a2a2a;
}

.swatch svg {
    width: 100%;
    height: 100%;
}

.swatch.selected {
    border: 1px solid #ddd;
}

.swatch.spot::after {
    content: "";
    position: absolute;
    right: 0;
    bottom: 0;
    border-left: 4px solid transparent;
    border-bottom: 4px solid #fff;
}

.swatch-tools {
    display: flex;
    align-items: center;
    gap: 13px;
    height: 18px;
    padding-left: 8px;
}

.wide-gap {
    margin-right: 10px;
}

/* Separations preview */
.separations {
    flex: 1;
    border-bottom: 0;
    padding-top: 2px;
}

.check {
    display: flex;
    align-items: center;
    gap: 5px;
    height: 23px;
    padding-left: 5px;
    color: #dedede;
    white-space: nowrap;
}

.check input {
    appearance: none;
    width: 10px;
    height: 10px;
    border-radius: 1px;
    background: #a8a8a8 url("data:image/svg+xml,%3Csvg xmlns='http://www.w3.org/2000/svg' width='10' height='10'%3E%3Cpath d='M2 5l2 2.500 4-5' fill='none' stroke='%23222' stroke-width='1.500'/%3E%3C/svg%3E");
}

.inks {
    display: flex;
    height: 93px;
    margin: 0 4px;
    border: 1px solid #3f3f3f;
}

.inks ul {
    flex: 1;
    display: flex;
    flex-direction: column;
    margin: 0;
    padding: 0;
    list-style: none;
}

.inks li {
    flex: 1;
    display: flex;
    align-items: center;
    padding-left: 3px;
    border-bottom: 1px solid #3f3f3f;
}

.inks li:last-child {
    border-bottom: 0;
}

.inks i {
    width: 9px;
    height: 9px;
    margin: 0 4px 0 7px;
}

.ink-yellow {
    background: #ffed00;
}

.ink-black {
    background: #000;
}

.ink-gold {
    background: #c99a66;
}

.ink-purple {
    background: #4d1145;
}

.ink-white {
    background: #a48a7f;
}

.inks-scroll {
    width: 10px;
    display: flex;
    flex-direction: column;
    align-items: center;
    padding: 1px 0;
    background: #2a2a2a;
    color: #888;
}

.inks-scroll span {
    width: 8px;
    height: 45px;
    margin-top: auto;
    border-radius: 4px;
    background: #424242;
}
```
FILE: script.js
```javascript
var SVG = 'http://www.w3.org/2000/svg';
var UNIT = 53.62 / 5;

function add(parent, name, attrs, text) {
    var el = document.createElementNS(SVG, name);
    for (var key in attrs) el.setAttribute(key, attrs[key]);
    if (text) el.textContent = text;
    parent.appendChild(el);
}

// Horizontal ruler, first labelled tick is 45
function drawHorizontal() {
    var ruler = document.getElementById('rulerH');
    for (var n = 44; n <= 134; n++) {
        var x = Math.round(16 + (n - 45) * UNIT) + 0.5;
        var major = n % 5 === 0;
        add(ruler, 'path', { d: 'M' + x + (major ? ' 0' : ' 6') + 'V9', stroke: '#777' });
        add(ruler, 'path', { d: 'M' + (x + 5) + ' 7V9', stroke: '#555' });
        if (major) add(ruler, 'text', { x: x + 1, y: 6 }, String(n));
    }
}

// Vertical ruler, digits are stacked above the tick
function drawVertical() {
    var ruler = document.getElementById('rulerV');
    for (var n = -12; n <= 43; n++) {
        var y = Math.round(135 + n * UNIT) + 0.5;
        var major = n % 5 === 0;
        add(ruler, 'path', { d: 'M' + (major ? '0 ' : '5 ') + y + 'H8', stroke: '#777' });
        add(ruler, 'path', { d: 'M6 ' + (y + 5) + 'H8', stroke: '#555' });
        if (major) {
            var digits = String(Math.abs(n)).split('');
            digits.forEach(function (digit, i) {
                add(ruler, 'text', { x: 1, y: y - 3 - (digits.length - 1 - i) * 5 }, digit);
            });
        }
    }
}

// A trailing * marks a spot color
function fillSwatches(id, colors) {
    var grid = document.getElementById(id);
    colors.split(' ').forEach(function (color) {
        var cell = document.createElement('button');
        cell.className = 'swatch';
        cell.setAttribute('aria-label', color);
        if (color === 'none') {
            cell.style.background = '#fff';
            cell.innerHTML = '<svg viewBox="0 0 16 16"><path d="M0 16L16 0" stroke="#d8232a" stroke-width="1.500"/></svg>';
        } else if (color === 'registration') {
            cell.style.background = '#eee';
            cell.innerHTML = '<svg viewBox="0 0 16 16"><path d="M0 8h16M8 0v16" stroke="#666"/><circle cx="8" cy="8" r="5" fill="none" stroke="#888"/><circle cx="8" cy="8" r="2" fill="none" stroke="#888"/></svg>';
        } else if (color === 'folder') {
            cell.style.borderColor = 'transparent';
            cell.innerHTML = '<svg viewBox="0 0 14 12"><use href="#folder"/></svg>';
        } else {
            cell.style.background = color.replace('*', '');
            if (color.endsWith('*')) cell.classList.add('spot');
        }
        grid.appendChild(cell);
    });
}

drawHorizontal();
drawVertical();

fillSwatches('mainSwatches',
    'none registration #fff #000 #e60020 #ffee00 #009540 #009fe3 #312783 #e6007e #be1622 ' +
    '#e52d32 #e94e24 #f39210 #fbb041 #fcea2c #dedc00 #94c02b #3aaa35 #0b8f3c #0b6636 #35a866 ' +
    '#17a096 #33aee4 #1070b8 #2b3086 #28255d #66257f #93217e #a11b5b #d70c52 #e81f76 #cbbba0 ' +
    '#a38a7b #a08777* #7b695c #634e42 #c99864 #cd9b62* #b17f4c #936037 #7b4c26 #683c11 #432918 ' +
    '#4d1145*');
fillSwatches('graySwatches', 'folder #000 #333132 #575556 #706f6f #878686 #9c9b9b #b2b1b1 #c5c5c5 #d9d9d9 #ececec #f6f6f6');
fillSwatches('brightSwatches', 'folder #e3001b #e85a1a #ffdb10 #119a3b #233688 #7c3a88');
document.querySelectorAll('#mainSwatches .swatch')[3].classList.add('selected');
```
